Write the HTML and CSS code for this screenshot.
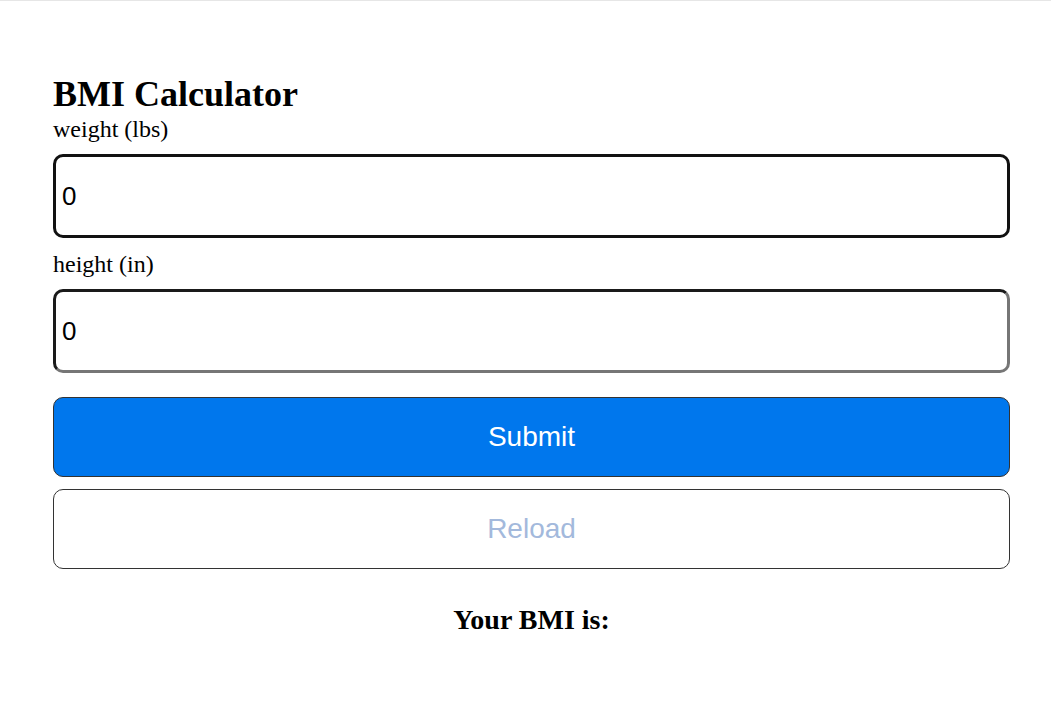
FILE: index.html
```html
<!DOCTYPE html>
<html lang="en">
<head>
  <meta charset="UTF-8">
  <title>BMI Calculator</title>
  <link rel="stylesheet" href="styles.css">
</head>
<body>

  <div class="container">
    <h2>BMI Calculator</h2>

    <form id="bmiForm" class="bmi-form">
      <label for="weight">weight (lbs)</label>
      <input type="text" id="weight" class="field field-active" value="0" autofocus>

      <label for="height">height (in)</label>
      <input type="text" id="height" class="field" value="0">

      <button type="submit" class="btn btn-submit">Submit</button>
      <button type="button" class="btn btn-reload">Reload</button>
    </form>

    <h3 class="result">Your BMI is:</h3>
  </div>

</body>
</html>
```

FILE: styles.css
```css
/* reset */
*, *::before, *::after {
  box-sizing: border-box;
}
html, body {
  margin: 0;
  padding: 0;
  background-color: #fff;
  font-family: "Liberation Serif", "Times New Roman", serif;
}
body {
  border-top: 1px solid #e6e6e6;
}

/* page frame */
.container {
  padding: 73px 41px 40px 53px;
}

h2 {
  margin: 0;
  font-size: 36px;
  line-height: 41px;
  font-weight: bold;
}

/* form */
.bmi-form {
  display: flex;
  flex-direction: column;
}
.bmi-form label {
  font-size: 24px;
  line-height: 28px;
  margin-bottom: 11px;
}
.field {
  height: 84px;
  margin-bottom: 12px;
  padding: 0 6px;
  border: 3px solid;
  border-color: #1a1a1a #767676 #767676 #1a1a1a;
  border-radius: 10px;
  font-family: "Liberation Sans", Arial, sans-serif;
  font-size: 26px;
  color: #000;
  caret-color: #000;
  background: #fff;
  outline: none;
}
.field-active {
  border-color: #111;
}
#height {
  margin-bottom: 24px;
}

/* buttons */
.btn {
  height: 80px;
  border: 1px solid #333;
  border-radius: 10px;
  font-family: "Liberation Sans", Arial, sans-serif;
  font-size: 28px;
  cursor: pointer;
}
.btn-submit {
  background-color: #0077ed;
  color: #fff;
  margin-bottom: 12px;
}
.btn-reload {
  background-color: #fff;
  color: #a3b9dc;
}

/* result */
.result {
  margin: 35px 0 0;
  text-align: center;
  font-size: 28px;
  line-height: 32px;
}
```
